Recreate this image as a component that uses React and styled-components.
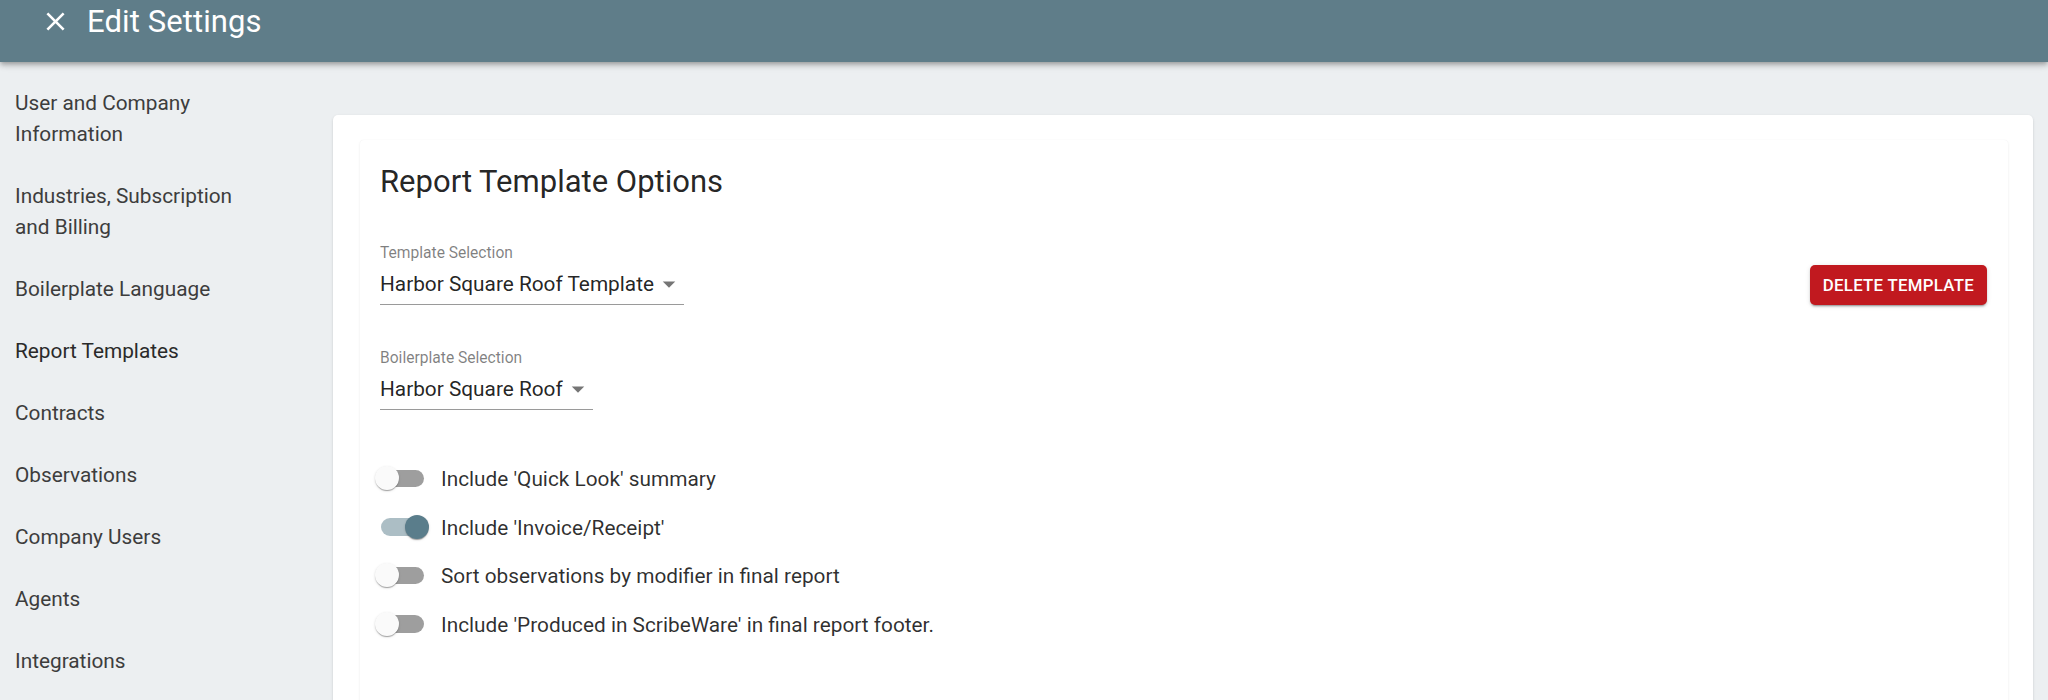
import React, { useState } from "react";
import styled, { createGlobalStyle } from "styled-components";

const primary = "#5a7d8b";

const GlobalStyle = createGlobalStyle`
  html, body {
    margin: 0;
    padding: 0;
    height: 700px;
    overflow: hidden;
    background: #eceff1;
    font-family: Roboto, "Liberation Sans", Arial, sans-serif;
    -webkit-font-smoothing: antialiased;
  }
  * { box-sizing: border-box; }
`;

// Page layout
const Page = styled.div`
  height: 700px;
  display: flex;
  flex-direction: column;
  background: #eceff1;
  overflow: hidden;
`;

const Header = styled.header`
  height: 62px;
  flex-shrink: 0;
  background: #5f7d89;
  color: #fff;
  display: flex;
  align-items: flex-start;
  padding-left: 40px;
  box-shadow: 0 2px 4px -1px rgba(0, 0, 0, 0.2), 0 4px 5px 0 rgba(0, 0, 0, 0.14),
    0 1px 10px 0 rgba(0, 0, 0, 0.12);
  position: relative;
  z-index: 2;
`;

const HeaderInner = styled.div`
  height: 42px;
  display: flex;
  align-items: center;
  gap: 16px;
`;

const CloseButton = styled.button`
  border: 0;
  background: transparent;
  padding: 0;
  width: 31px;
  height: 31px;
  color: #fff;
  display: flex;
  cursor: pointer;

  svg {
    width: 31px;
    height: 31px;
    fill: currentColor;
  }
`;

const HeaderTitle = styled.h1`
  margin: 0;
  font-size: 31px;
  font-weight: 400;
  line-height: 1;
  letter-spacing: 0.1px;
`;

const Body = styled.div`
  flex: 1;
  display: flex;
  min-height: 0;
`;

// Sidebar
const Sidebar = styled.nav`
  width: 333px;
  flex-shrink: 0;
  padding-top: 10px;
`;

const NavItem = styled.div`
  padding: 15.5px 15px;
  width: 262px;
  font-size: 20.8px;
  line-height: 31px;
  color: ${(props) => (props.active ? "#2a2a2a" : "#3d3d3d")};
  cursor: pointer;
`;

// Main content
const Main = styled.main`
  flex: 1;
  padding: 53px 15px 0 0;
  min-width: 0;
`;

const OuterCard = styled.section`
  background: #fff;
  border-radius: 5px;
  box-shadow: 0 1px 3px 0 rgba(0, 0, 0, 0.12), 0 1px 1px 0 rgba(0, 0, 0, 0.08);
  padding: 25px 25px 0 27px;
  height: 700px;
`;

const InnerCard = styled.div`
  background: #fff;
  border-radius: 4px;
  box-shadow: 0 1px 3px 0 rgba(0, 0, 0, 0.07), 0 0 1px 0 rgba(0, 0, 0, 0.06);
  padding: 22px 21px 40px 20px;
  min-height: 620px;
`;

const Title = styled.h2`
  margin: 0 0 42px;
  font-size: 31px;
  font-weight: 400;
  line-height: 40px;
  color: rgba(0, 0, 0, 0.87);
`;

const FieldRow = styled.div`
  display: flex;
  align-items: flex-end;
  justify-content: space-between;
  margin-top: ${(props) => props.mt || "0"};
`;

const Field = styled.div`
  display: flex;
  flex-direction: column;
  align-items: flex-start;
`;

const FieldLabel = styled.label`
  font-size: 15.6px;
  line-height: 18px;
  color: rgba(0, 0, 0, 0.5);
  margin-bottom: 4px;
`;

const SelectBox = styled.div`
  position: relative;
  display: inline-flex;
  align-items: center;
  padding: 6px 30px 8px 0;
  border-bottom: 1.25px solid #9a9a9a;
  font-size: 20.8px;
  line-height: 24px;
  color: rgba(0, 0, 0, 0.87);
  cursor: pointer;

  svg {
    position: absolute;
    right: 0;
    top: 3px;
    width: 30px;
    height: 30px;
    fill: rgba(0, 0, 0, 0.54);
  }
`;

const DangerButton = styled.button`
  height: 40px;
  padding: 0 13px;
  border: 0;
  border-radius: 5px;
  background: #c1191f;
  color: #fff;
  font-family: Roboto, "Liberation Sans", Arial, sans-serif;
  font-size: 16.8px;
  font-weight: 500;
  letter-spacing: 0.3px;
  text-transform: uppercase;
  box-shadow: 0 3px 1px -2px rgba(0, 0, 0, 0.2), 0 2px 2px 0 rgba(0, 0, 0, 0.14),
    0 1px 5px 0 rgba(0, 0, 0, 0.12);
  cursor: pointer;
`;

const SwitchList = styled.div`
  margin-top: 45px;
  display: flex;
  flex-direction: column;
`;

const SwitchRow = styled.label`
  height: 48.5px;
  display: flex;
  align-items: center;
  cursor: pointer;
`;

const SwitchControl = styled.span`
  position: relative;
  width: 61px;
  height: 48px;
  flex-shrink: 0;
`;

const Track = styled.span`
  position: absolute;
  left: 1px;
  top: 14.5px;
  width: 43px;
  height: 17.5px;
  border-radius: 9px;
  background: ${(props) => (props.on ? primary : "#000")};
  opacity: ${(props) => (props.on ? 0.5 : 0.38)};
`;

const Thumb = styled.span`
  position: absolute;
  top: 11px;
  left: ${(props) => (props.on ? "25px" : "-5px")};
  width: 24px;
  height: 24px;
  border-radius: 50%;
  background: ${(props) => (props.on ? primary : "#fafafa")};
  box-shadow: 0 2px 1px -1px rgba(0, 0, 0, 0.2), 0 1px 1px 0 rgba(0, 0, 0, 0.14),
    0 1px 3px 0 rgba(0, 0, 0, 0.12);
  transition: left 0.15s ease;
`;

const SwitchLabel = styled.span`
  font-size: 20.8px;
  line-height: 24px;
  color: rgba(0, 0, 0, 0.82);
`;

const CloseIcon = () => (
  <svg viewBox="0 0 24 24">
    <path d="M19 6.41L17.59 5 12 10.59 6.41 5 5 6.41 10.59 12 5 17.59 6.41 19 12 13.41 17.59 19 19 17.59 13.41 12z" />
  </svg>
);

const ArrowDropDown = () => (
  <svg viewBox="0 0 24 24">
    <path d="M7 10l5 5 5-5z" />
  </svg>
);

const navItems = [
  "User and Company Information",
  "Industries, Subscription and Billing",
  "Boilerplate Language",
  "Report Templates",
  "Contracts",
  "Observations",
  "Company Users",
  "Agents",
  "Integrations",
];

const initialOptions = [
  { id: "quicklook", label: "Include 'Quick Look' summary", on: false },
  { id: "invoice", label: "Include 'Invoice/Receipt'", on: true },
  { id: "sort", label: "Sort observations by modifier in final report", on: false },
  {
    id: "footer",
    label: "Include 'Produced in ScribeWare' in final report footer.",
    on: false,
  },
];

export default function App() {
  const [options, setOptions] = useState(initialOptions);

  const toggle = (id) =>
    setOptions((prev) =>
      prev.map((o) => (o.id === id ? { ...o, on: !o.on } : o))
    );

  return (
    <>
      <GlobalStyle />
      <Page>
        <Header>
          <HeaderInner>
            <CloseButton aria-label="close">
              <CloseIcon />
            </CloseButton>
            <HeaderTitle>Edit Settings</HeaderTitle>
          </HeaderInner>
        </Header>
        <Body>
          <Sidebar>
            {navItems.map((item) => (
              <NavItem key={item} active={item === "Report Templates"}>
                {item}
              </NavItem>
            ))}
          </Sidebar>
          <Main>
            <OuterCard>
              <InnerCard>
                <Title>Report Template Options</Title>
                <FieldRow>
                  <Field>
                    <FieldLabel>Template Selection</FieldLabel>
                    <SelectBox>
                      Harbor Square Roof Template
                      <ArrowDropDown />
                    </SelectBox>
                  </Field>
                  <DangerButton>Delete Template</DangerButton>
                </FieldRow>
                <FieldRow mt="44px">
                  <Field>
                    <FieldLabel>Boilerplate Selection</FieldLabel>
                    <SelectBox>
                      Harbor Square Roof
                      <ArrowDropDown />
                    </SelectBox>
                  </Field>
                </FieldRow>
                <SwitchList>
                  {options.map((o) => (
                    <SwitchRow key={o.id} onClick={() => toggle(o.id)}>
                      <SwitchControl>
                        <Track on={o.on} />
                        <Thumb on={o.on} />
                      </SwitchControl>
                      <SwitchLabel>{o.label}</SwitchLabel>
                    </SwitchRow>
                  ))}
                </SwitchList>
              </InnerCard>
            </OuterCard>
          </Main>
        </Body>
      </Page>
    </>
  );
}
